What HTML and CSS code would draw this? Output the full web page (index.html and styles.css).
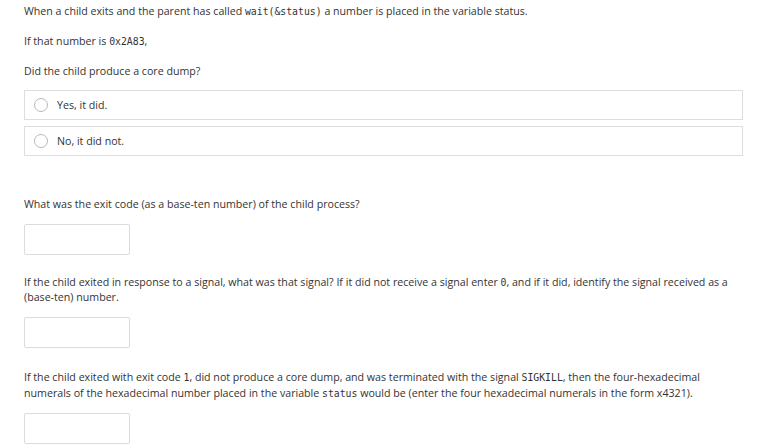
FILE: index.html
```html
<!DOCTYPE html>
<html>
<head>
<meta charset="utf-8">
<link rel="stylesheet" href="styles.css">
</head>
<body>
<div class="page">
  <p class="q">When a child exits and the parent has called <code>wait(&amp;status)</code> a number is placed in the variable status.</p>
  <p class="q">If that number is <code>0x2A83</code>,</p>
  <p class="q">Did the child produce a core dump?</p>
  <div class="answers">
    <label class="answer"><span class="radio"></span><span>Yes, it did.</span></label>
    <label class="answer"><span class="radio"></span><span>No, it did not.</span></label>
  </div>
  <p class="q q-gap">What was the exit code (as a base-ten number) of the child process?</p>
  <div class="input"></div>
  <p class="q q-gap2">If the child exited in response to a signal, what was that signal? If it did not receive a signal enter <code>0</code>, and if it did, identify the signal received as a (base-ten) number.</p>
  <div class="input"></div>
  <p class="q q-gap3">If the child exited with exit code <code>1</code>, did not produce a core dump, and was terminated with the signal <code>SIGKILL</code>, then the four-hexadecimal numerals of the hexadecimal number placed in the variable <code>status</code> would be (enter the four hexadecimal numerals in the form x4321).</p>
  <div class="input"></div>
</div>
</body>
</html>
```
FILE: styles.css
```css
html, body {
  margin: 0;
  padding: 0;
  background: #ffffff;
}
.page {
  width: 714px;
  padding: 4px 0 0 24px;
  font-family: "Open Sans", "Noto Sans", sans-serif;
  font-size: 10.65px;
  line-height: 15px;
  color: #333333;
}
.q {
  margin: 0 0 15px 0;
}
code {
  font-family: "DejaVu Sans Mono", "Liberation Mono", monospace;
  font-size: 9.8px;
  line-height: 1;
  color: #333333;
}
.answers {
  margin-top: -4px;
  display: flex;
  flex-direction: column;
  gap: 6px;
}
.answer {
  display: flex;
  align-items: center;
  gap: 9px;
  height: 28px;
  border: 1px solid #dedede;
  padding-left: 9px;
  margin-right: -5px;
}
.radio {
  width: 12px;
  height: 12px;
  border: 1px solid #b9b9b9;
  border-radius: 50%;
  background: #fff;
}
.q-gap {
  margin-top: 41px;
  margin-bottom: 12px;
}
.q-gap2 {
  margin-top: 20px;
  margin-bottom: 12px;
}
.q-gap3 {
  margin-top: 21px;
  margin-bottom: 12px;
  line-height: 16px;
}
.input {
  width: 104px;
  height: 29px;
  border: 1px solid #dcdcdc;
  border-radius: 2px;
  background: #fff;
}
```
